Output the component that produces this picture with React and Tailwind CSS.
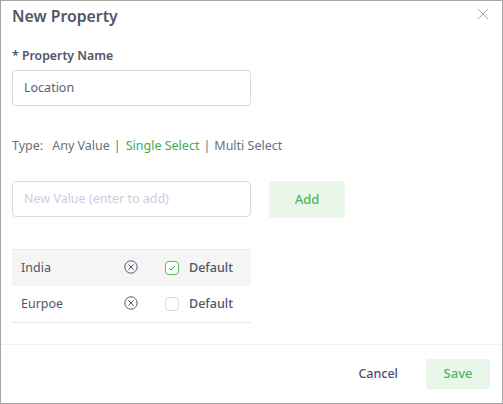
import React from 'react';
import { X } from 'lucide-react';

const FONT = "font-['Noto_Sans',sans-serif]";

// Small circled cross used to remove a value row.
const RemoveIcon = () => (
    <svg width="14" height="14" viewBox="0 0 14 14" fill="none" stroke="#4f5b76" strokeWidth="1" className="mb-[2px] shrink-0">
        <circle cx="7" cy="7" r="6.2" />
        <path d="M4.4 4.4l5.2 5.2M9.6 4.4l-5.2 5.2" />
    </svg>
);

const ValueRow = ({ name, checked }) => (
    <div className={`flex h-[36px] items-center text-[12.5px] ${checked ? 'bg-[#f5f5f5]' : 'bg-white'}`}>
        <span className="w-[112px] pl-[9px] text-[#4f5668]">{name}</span>
        <RemoveIcon />
        <span className="ml-[27px] flex items-center">
            {checked ? (
                <span className="flex h-[14px] w-[14px] items-center justify-center rounded-[4px] border-[1.5px] border-[#4cc25f] bg-white">
                    <svg width="8" height="6" viewBox="0 0 8 6" fill="none" stroke="#3fae52" strokeWidth="1">
                        <path d="M1 3l2 2 4-4" />
                    </svg>
                </span>
            ) : (
                <span className="h-[14px] w-[14px] rounded-[4px] border-[1.5px] border-[#d5d9e8] bg-white" />
            )}
            <span className="ml-[10px] font-medium text-[#4f5668]">Default</span>
        </span>
    </div>
);

export default function App() {
    return (
        <div className={`${FONT} flex h-[404px] w-[503px] flex-col border border-[#a6a6a6] bg-white`}>
            <div className="relative pl-[11px] pt-[2px]">
                <h1 className="text-[15.8px] font-semibold leading-[26px] text-[#4f5668]">New Property</h1>
                <X size={20} strokeWidth={1} className="absolute right-[9px] top-[3px] text-[#7f95b5]" />
            </div>

            <div className="flex-1 pl-[11px]">
                <label className="mt-[16px] block text-[12.3px] font-semibold leading-[22px] text-[#4f5668]">* Property Name</label>
                <div className="mt-[3px] flex h-[36px] w-[239px] items-center rounded-[4px] border border-[#d5d9e8] pl-[11px] text-[12.5px] text-[#5a6072]">
                    Location
                </div>

                <div className="mt-[29px] flex h-[22px] items-center text-[12.5px] text-[#6b6f7b]">
                    <span>Type:</span>
                    <span className="ml-[9px]">Any Value</span>
                    <span className="ml-[4px]">|</span>
                    <span className="ml-[5px] text-[#43a853]">Single Select</span>
                    <span className="ml-[4px]">|</span>
                    <span className="ml-[4px]">Multi Select</span>
                </div>

                <div className="mt-[24px] flex items-start">
                    <div className="flex h-[36px] w-[239px] items-center rounded-[4px] border border-[#d5d9e8] pl-[11px] text-[12.5px] text-[#c9cede]">
                        New Value (enter to add)
                    </div>
                    <button type="button" className="ml-[18px] h-[37px] w-[76px] rounded-[3px] bg-[#e9f7ea] text-[13px] font-medium text-[#4cb85c]">
                        Add
                    </button>
                </div>

                <div className="mt-[31px] w-[239px] border-b border-t border-[#e8e8e8]">
                    <ValueRow name="India" checked />
                    <ValueRow name="Eurpoe" />
                </div>
            </div>

            <div className="flex h-[59px] items-center justify-end border-t border-[#f0f0f0] pr-[12px]">
                <button type="button" className="text-[12.5px] font-medium text-[#4a5170]">Cancel</button>
                <button type="button" className="ml-[28px] h-[30px] w-[64px] rounded-[3px] bg-[#e9f7ea] text-[13px] font-medium text-[#4cb85c]">
                    Save
                </button>
            </div>
        </div>
    );
}
